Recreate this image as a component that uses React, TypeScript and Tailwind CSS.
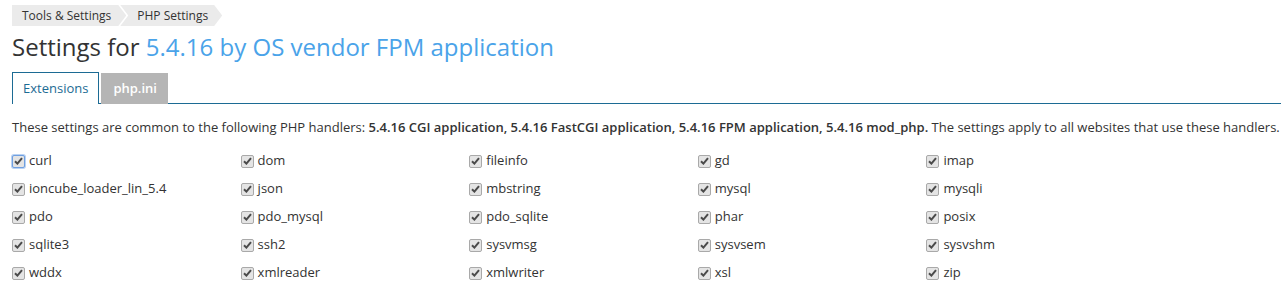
import React from "react";

const EXTENSIONS = [
  "curl", "dom", "fileinfo", "gd", "imap",
  "ioncube_loader_lin_5.4", "json", "mbstring", "mysql", "mysqli",
  "pdo", "pdo_mysql", "pdo_sqlite", "phar", "posix",
  "sqlite3", "ssh2", "sysvmsg", "sysvsem", "sysvshm",
  "wddx", "xmlreader", "xmlwriter", "xsl", "zip",
];

function Check({ focused }: { focused?: boolean }) {
  return (
    <span
      className={
        "flex h-[13px] w-[13px] shrink-0 items-center justify-center rounded-[2px] border bg-[#e4e4e4] " +
        (focused ? "border-[#6f9fe0] shadow-[0_0_0_1px_#b9d2f3]" : "border-[#a9a9a9]")
      }
    >
      <svg width="9" height="8" viewBox="0 0 9 8">
        <path d="M1 4.2 L3.4 6.6 L8 1.2" fill="none" stroke="#4a4a4a" strokeWidth="2" />
      </svg>
    </span>
  );
}

export default function App() {
  return (
    <div className="min-h-[296px] bg-white px-3 pt-[5px] font-['Open_Sans',sans-serif] text-[#333]">
      {/* breadcrumbs */}
      <div className="flex h-[21px] text-[12px] leading-[21px]">
        <span className="bg-[#ebebeb] pl-[10px] pr-[15px] [clip-path:polygon(0_0,calc(100%-8px)_0,100%_50%,calc(100%-8px)_100%,0_100%)]">
          Tools &amp; Settings
        </span>
        <span className="-ml-[6px] bg-[#ebebeb] pl-[17px] pr-[14px] [clip-path:polygon(0_0,calc(100%-8px)_0,100%_50%,calc(100%-8px)_100%,0_100%,8px_50%)]">
          PHP Settings
        </span>
      </div>

      <h1 className="mt-[5px] text-[24px] leading-[32px] font-normal">
        Settings for <span className="text-[#4aa3e9]">5.4.16 by OS vendor FPM application</span>
      </h1>

      {/* tabs */}
      <div className="-mr-3 mt-[9px] flex items-end border-b border-[#1c6b94]">
        <div className="-mb-px flex h-[32px] items-center border border-b-0 border-[#1c6b94] bg-white px-[10px] text-[13px] text-[#1c6b94]">
          Extensions
        </div>
        <div className="ml-[2px] -mb-px flex h-[31px] items-center bg-[#b5b5b5] pl-[12px] pr-[11px] text-[13px] font-semibold text-white">
          php.ini
        </div>
      </div>

      <p className="mt-[15px] text-[13px] leading-[17px] whitespace-nowrap">
        These settings are common to the following PHP handlers:{" "}
        <b className="font-semibold">
          5.4.16 CGI application, 5.4.16 FastCGI application, 5.4.16 FPM application, 5.4.16 mod_php.
        </b>{" "}
        The settings apply to all websites that use these handlers.
      </p>

      <div className="mt-[15px] grid grid-cols-[repeat(5,228.6px)] gap-y-[8px]">
        {EXTENSIONS.map((name, i) => (
          <label key={name} className="flex h-[20px] items-center gap-[4px] text-[13px]">
            <Check focused={i === 0} />
            <span>{name}</span>
          </label>
        ))}
      </div>
    </div>
  );
}
